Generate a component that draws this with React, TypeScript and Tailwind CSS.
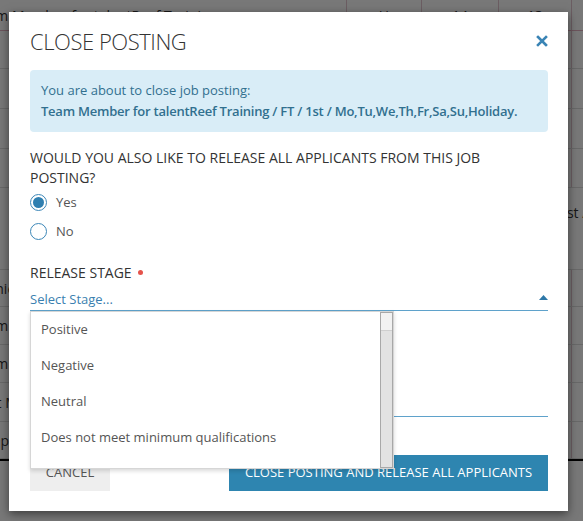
const tableRows = [
  { h: "h-[31px]", name: "Team Member for talentReef Training", a: "H", b: "14", c: "13", d: "", head: true },
  { h: "h-[38px]", name: "", a: "", b: "", c: "", d: "" },
  { h: "h-[40px]", name: "", a: "", b: "", c: "", d: "" },
  { h: "h-[40px]", name: "", a: "", b: "", c: "", d: "" },
  { h: "h-[39px]", name: "", a: "", b: "", c: "", d: "" },
  { h: "h-[82px]", name: "Tool", a: "", b: "", c: "", d: "FT / 1st / Mo", tall: true },
  { h: "h-[37px]", name: "Cashier Shift", a: "", b: "", c: "", d: "" },
  { h: "h-[38px]", name: "Team Member", a: "", b: "", c: "", d: "" },
  { h: "h-[38px]", name: "Team Member", a: "", b: "", c: "", d: "" },
  { h: "h-[39px]", name: "Shift Manager", a: "", b: "", c: "", d: "" },
  { h: "h-[37px]", name: "Temp", a: "", b: "", c: "", d: "" },
];

const stages = [
  "Positive",
  "Negative",
  "Neutral",
  "Does not meet minimum qualifications",
  "Not a fit for the position at this time",
];

const Background = () => (
  <div className="-ml-[28px] w-[640px] text-[14px] text-[#333]">
    {tableRows.map((r, i) => (
      <div
        key={i}
        className={`flex ${r.h} border-b ${r.head ? "border-[#e6b3c3]" : "border-[#dddddd]"}`}
      >
        <div className={`flex w-[374px] whitespace-nowrap ${r.tall ? "items-start pt-[6px]" : "items-center"}`}>
          {r.name}
        </div>
        <div className="flex w-[75px] items-center justify-center border-l border-[#e3c6d0]">{r.a}</div>
        <div className="flex w-[77px] items-center justify-center border-l border-[#e3c6d0]">{r.b}</div>
        <div className="flex w-[73px] items-center justify-center border-l border-[#e3c6d0]">{r.c}</div>
        <div
          className={`flex flex-1 whitespace-nowrap border-l border-[#e3c6d0] pl-[2px] ${r.tall ? "items-start pt-[14px]" : "items-center"}`}
        >
          {r.d}
        </div>
      </div>
    ))}
    <div className="h-[2px] bg-black" />
  </div>
);

const Radio = ({ checked, label }: { checked?: boolean; label: string }) => (
  <label className="flex h-[29px] items-center gap-[9px] text-[13px] text-[#555]">
    <span className="flex h-[17px] w-[17px] items-center justify-center rounded-full border-[1.5px] border-[#3c87b8] bg-white">
      {checked && <span className="h-[11px] w-[11px] rounded-full bg-[#2f7fb0]" />}
    </span>
    {label}
  </label>
);

export default function App() {
  return (
    <div className="relative h-[521px] w-[583px] overflow-hidden bg-white font-['Open_Sans',sans-serif]">
      <Background />

      <div className="absolute inset-0 bg-black/[0.53]">
        <div className="ml-[9px] mt-[12px] w-[559px] bg-white pb-[20px] pl-[21px] pr-[20px] pt-[16px] shadow-[0_3px_9px_rgba(0,0,0,0.5)]">
          <div className="flex h-[26px] items-center justify-between">
            <h4 className="text-[22px] font-light leading-[26px] tracking-[-0.45px] text-[#333]">CLOSE POSTING</h4>
            <svg width="12" height="12" viewBox="0 0 12 12">
              <path d="M2 2L10 10M10 2L2 10" stroke="#3a84b5" strokeWidth="2.6" strokeLinecap="square" />
            </svg>
          </div>

          <div className="mt-[16px] rounded-[4px] bg-[#d9edf7] px-[11px] py-[10px] text-[13px] leading-[21px] text-[#31708f]">
            <p>You are about to close job posting:</p>
            <p className="font-semibold tracking-[-0.23px]">
              Team Member for talentReef Training / FT / 1st / Mo,Tu,We,Th,Fr,Sa,Su,Holiday.
            </p>
          </div>

          <p className="mt-[16px] text-[14px] leading-[20px] text-[#333]">
            WOULD YOU ALSO LIKE TO RELEASE ALL APPLICANTS FROM THIS JOB POSTING?
          </p>

          <Radio checked label="Yes" />
          <Radio label="No" />

          <div className="mt-[16px] flex h-[20px] items-center gap-[6px] text-[14px] text-[#333]">
            RELEASE STAGE
            <span className="h-[5px] w-[5px] rounded-full bg-[#e5534b]" />
          </div>

          <div className="relative">
            <div className="flex h-[29px] items-end justify-between border-b border-[#5fa2cb] pb-[1px]">
              <span className="text-[13px] leading-[20px] text-[#3a7fb0]">Select Stage...</span>
              <svg width="9" height="5" viewBox="0 0 9 5" className="mb-[9px]">
                <path d="M0 5L4.5 0L9 5Z" fill="#2e78a8" />
              </svg>
            </div>

            <div className="absolute left-0 top-full z-10 flex h-[158px] w-[364px] overflow-hidden border border-[#d6d6d6] bg-white shadow-[0_2px_4px_rgba(0,0,0,0.15)]">
              <ul className="flex-1">
                {stages.map((s) => (
                  <li key={s} className="flex h-[36px] items-center whitespace-nowrap px-[10px] text-[13px] text-[#555]">
                    {s}
                  </li>
                ))}
              </ul>
              <div className="flex w-[13px] flex-col border border-[#a8a8a8]">
                <div className="h-[17px] bg-[#f2f2f2]" />
                <div className="flex-1 border-t border-[#cfcfcf] bg-[#e2e2e2]" />
              </div>
            </div>
          </div>

          <div className="flex h-[106px] items-center border-b border-[#5fa2cb] text-[13px] text-[#333]">
            NOTES
          </div>

          <div className="mt-[38px] flex justify-between">
            <button className="h-[36px] w-[80px] bg-[#eeeeee] text-[13px] text-[#555]">CANCEL</button>
            <button className="h-[36px] w-[319px] bg-[#2e85b0] text-[13px] text-white">
              CLOSE POSTING AND RELEASE ALL APPLICANTS
            </button>
          </div>
        </div>
      </div>
    </div>
  );
}
